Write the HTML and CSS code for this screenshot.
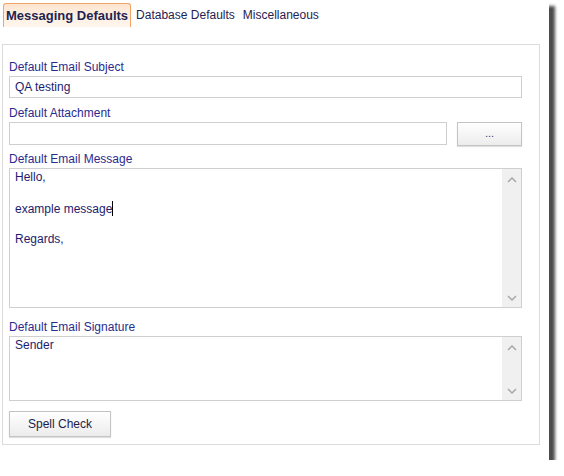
FILE: index.html
```html
<!DOCTYPE html>
<html lang="en">
<head>
  <meta charset="UTF-8">
  <title>Messaging Defaults</title>
  <link rel="stylesheet" href="styles.css">
</head>
<body>
  <div class="window">
    <div class="tabs">
      <div class="tab active">Messaging Defaults</div>
      <div class="tab">Database Defaults</div>
      <div class="tab">Miscellaneous</div>
    </div>

    <div class="panel">
      <div class="label">Default Email Subject</div>
      <div class="field">QA testing</div>

      <div class="label gap-s">Default Attachment</div>
      <div class="row">
        <div class="field grow"></div>
        <div class="btn browse">...</div>
      </div>

      <div class="label gap-m">Default Email Message</div>
      <div class="memo big">
        <div class="memo-text">Hello,<br><br>example message<span class="caret"></span><br><br>Regards,</div>
        <div class="scroll">
          <svg width="10" height="6" viewBox="0 0 10 6"><path d="M1 5 L5 1 L9 5" fill="none" stroke="#a8a8a8" stroke-width="1.5"/></svg>
          <svg width="10" height="6" viewBox="0 0 10 6"><path d="M1 1 L5 5 L9 1" fill="none" stroke="#a8a8a8" stroke-width="1.5"/></svg>
        </div>
      </div>

      <div class="label gap-l">Default Email Signature</div>
      <div class="memo small">
        <div class="memo-text">Sender</div>
        <div class="scroll">
          <svg width="10" height="6" viewBox="0 0 10 6"><path d="M1 5 L5 1 L9 5" fill="none" stroke="#a8a8a8" stroke-width="1.5"/></svg>
          <svg width="10" height="6" viewBox="0 0 10 6"><path d="M1 1 L5 5 L9 1" fill="none" stroke="#a8a8a8" stroke-width="1.5"/></svg>
        </div>
      </div>

      <div class="btn spell">Spell Check</div>
    </div>
  </div>
</body>
</html>
```

FILE: styles.css
```css
body {
  margin: 0;
  background: #ffffff;
  font-family: "Liberation Sans", Arial, sans-serif;
  font-size: 12px;
}
.window {
  width: 549px;
  height: 460px;
  box-sizing: border-box;
  padding: 3px 9px 0 2px;
  background: #ffffff;
  box-shadow: 6px 6px 3px rgba(0, 0, 0, 0.7);
}
.tabs {
  display: flex;
  align-items: flex-end;
  height: 24px;
  padding-left: 1px;
  gap: 6px;
}
.tab {
  color: #1f2350;
  font-size: 12px;
  line-height: 24px;
  padding: 0 1px;
}
.tab.active {
  font-weight: bold;
  font-size: 13px;
  padding: 0 2px;
  border: 1px solid #f0a468;
  border-bottom: none;
  border-radius: 3px 3px 0 0;
  background: linear-gradient(#fde6d0, #fff6ee);
  line-height: 23px;
  margin-right: -2px;
}
.panel {
  margin-top: 17px;
  height: 401px;
  box-sizing: border-box;
  border: 1px solid #dcdcdc;
  padding: 15px 17px 0 6px;
}
.label {
  color: #2b2b8e;
  line-height: 15px;
  height: 15px;
  margin-bottom: 1px;
}
.gap-s { margin-top: 8px; }
.gap-m { margin-top: 6px; }
.gap-l { margin-top: 12px; }
.field {
  height: 22px;
  box-sizing: border-box;
  border: 1px solid #cfcfcf;
  color: #1c1c6e;
  line-height: 20px;
  padding-left: 5px;
}
.row {
  display: flex;
  gap: 10px;
}
.grow {
  flex: 1;
  height: 23px;
}
.btn {
  box-sizing: border-box;
  border: 1px solid #c4c4c4;
  background: linear-gradient(#ffffff, #ececec);
  box-shadow: 0 1px 1px rgba(0, 0, 0, 0.12);
  color: #1c1c4a;
  text-align: center;
}
.browse {
  width: 65px;
  height: 24px;
  line-height: 20px;
  font-size: 11px;
  color: #3a3a7a;
}
.memo {
  display: flex;
  box-sizing: border-box;
  border: 1px solid #cfcfcf;
}
.memo.big { height: 140px; }
.memo.small { height: 65px; }
.memo-text {
  flex: 1;
  color: #1c1c6e;
  line-height: 15.3px;
  padding: 1px 5px;
}
.caret {
  display: inline-block;
  width: 1px;
  height: 15px;
  background: #000000;
  vertical-align: -3px;
}
.scroll {
  width: 19px;
  background: #f0f0f0;
  display: flex;
  flex-direction: column;
  justify-content: space-between;
  align-items: center;
  padding: 8px 0 6px;
}
.scroll svg { display: block; }
.spell {
  margin-top: 10px;
  width: 102px;
  height: 26px;
  line-height: 24px;
}
```
